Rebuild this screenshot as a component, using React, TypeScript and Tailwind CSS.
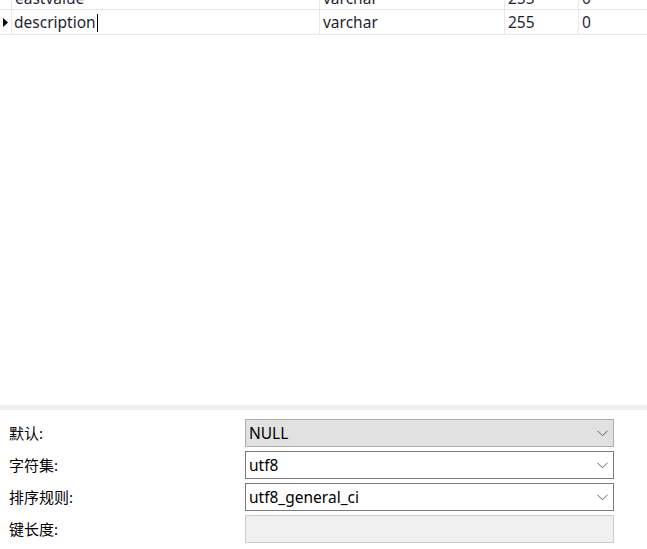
import React from "react";

const font = { fontFamily: '"Noto Sans", "Noto Sans CJK SC", sans-serif' };

function Chevron() {
  return (
    <svg width="11" height="7" viewBox="0 0 11 7" className="shrink-0">
      <path d="M0.5 0.8 L5.5 5.8 L10.5 0.8" fill="none" stroke="#606060" strokeWidth="1" />
    </svg>
  );
}

function Combo({ value, variant }: { value: string; variant: "gray" | "white" | "disabled" }) {
  const cls =
    variant === "gray"
      ? "border-[#adadad] bg-[#e1e1e1]"
      : variant === "white"
      ? "border-[#7a7a7a] bg-white"
      : "border-[#cccccc] bg-[#f0f0f0]";
  return (
    <div className={`flex h-[28px] w-[369px] items-center justify-between border pl-[3px] pr-[5px] ${cls}`}>
      <span className="pt-[2px] text-[15.5px] text-[#000]">{value}</span>
      {variant !== "disabled" && <Chevron />}
    </div>
  );
}

export default function App() {
  return (
    <div className="h-[549px] w-[647px] overflow-hidden bg-white text-[#1b1b1b]" style={font}>
      <div className="flex h-[405px] flex-col">
        <div className="-mt-[15px] flex h-[25px] border-b border-[#e8e8e8] text-[15.5px] text-[#1f1f35]">
          <div className="w-[12px] border-r border-[#e8e8e8]" />
          <div className="w-[308px] border-r border-[#e8e8e8] pl-[3px] pt-[1px] leading-[24px]">eastvalue</div>
          <div className="w-[185px] border-r border-[#e8e8e8] pl-[3px] pt-[1px] leading-[24px]">varchar</div>
          <div className="w-[74px] border-r border-[#e8e8e8] pl-[3px] pt-[1px] leading-[24px]">255</div>
          <div className="flex-1 pl-[3px] pt-[1px] leading-[24px]">0</div>
        </div>
        <div className="flex h-[25px] border-b border-[#e8e8e8] text-[15.5px] text-[#1f1f35]">
          <div className="flex w-[12px] items-center justify-center border-r border-[#e8e8e8]">
            <svg width="5" height="9" viewBox="0 0 5 9">
              <path d="M0 0 L5 4.5 L0 9 Z" fill="#000" />
            </svg>
          </div>
          <div className="flex w-[308px] items-center border-r border-[#e8e8e8] pl-[2px] pt-[2px]">
            <span>description</span>
            <span className="ml-[1px] inline-block h-[18px] w-[1px] bg-black" />
          </div>
          <div className="flex w-[185px] items-center border-r border-[#e8e8e8] pl-[3px] pt-[2px]">varchar</div>
          <div className="flex w-[74px] items-center border-r border-[#e8e8e8] pl-[3px] pt-[2px]">255</div>
          <div className="flex flex-1 items-center pl-[3px] pt-[2px]">0</div>
        </div>
      </div>
      <div className="h-[5px] bg-[#f0f0f0]" />
      <div className="flex flex-col gap-[4px] pt-[9px]">
        {[
          ["默认:", "NULL", "gray"],
          ["字符集:", "utf8", "white"],
          ["排序规则:", "utf8_general_ci", "white"],
          ["键长度:", "", "disabled"],
        ].map(([label, value, v]) => (
          <div key={label} className="flex items-center">
            <div className="w-[245px] pl-[9px] text-[15px] text-[#000]">{label}</div>
            <Combo value={value} variant={v as "gray" | "white" | "disabled"} />
          </div>
        ))}
      </div>
    </div>
  );
}
